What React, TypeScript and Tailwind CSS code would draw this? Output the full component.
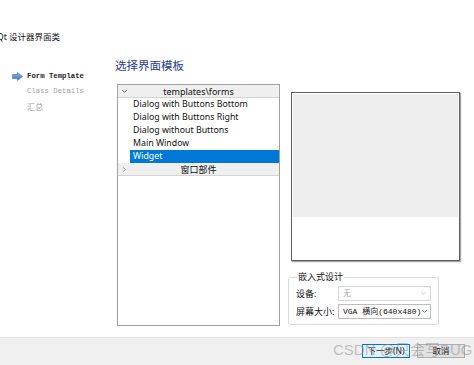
import React from 'react';

const templates = [
  'Dialog with Buttons Bottom',
  'Dialog with Buttons Right',
  'Dialog without Buttons',
  'Main Window',
  'Widget',
];

function Chevron({ dir, color = '#7a7a7a' }: { dir: 'down' | 'right'; color?: string }) {
  return (
    <svg width="7" height="7" viewBox="0 0 8 8" className="shrink-0">
      {dir === 'down' ? (
        <path d="M1.5 2.5 L4 5 L6.5 2.5" fill="none" stroke={color} strokeWidth="1.1" />
      ) : (
        <path d="M2.5 1.5 L5 4 L2.5 6.5" fill="none" stroke={color} strokeWidth="1.1" />
      )}
    </svg>
  );
}

function NavArrow() {
  return (
    <svg width="11" height="9" viewBox="0 0 11 9" className="shrink-0">
      <defs>
        <linearGradient id="ar" x1="0" y1="0" x2="0" y2="1">
          <stop offset="0" stopColor="#8db4ec" />
          <stop offset="1" stopColor="#3e75c9" />
        </linearGradient>
      </defs>
      <path d="M0.5 2.5 H5.5 V0.5 L10.5 4.5 L5.5 8.5 V6.5 H0.5 Z" fill="url(#ar)" stroke="#3a6bb8" strokeWidth="0.6" />
    </svg>
  );
}

function TreeHeader({ label, open }: { label: string; open: boolean }) {
  return (
    <div className="h-[13px] flex items-center bg-[#efefef] border-b border-[#d4d4d4] pl-[3px]">
      <Chevron dir={open ? 'down' : 'right'} color={open ? '#555555' : '#9a9a9a'} />
      <span className="flex-1 text-center pr-[10px] text-[9px] leading-[13px] text-[#111]">{label}</span>
    </div>
  );
}

function Combo({ text, disabled }: { text: string; disabled?: boolean }) {
  return (
    <div
      className={`w-[93px] h-[15px] flex items-center justify-between pl-[4px] pr-[3px] border bg-white ${
        disabled ? 'border-[#d6d6d6] text-[#a8a8a8]' : 'border-[#bdbdbd] text-[#111]'
      }`}
    >
      <span className="text-[8px] leading-[13px] font-['Liberation_Mono','Noto_Sans_CJK_SC',monospace] whitespace-nowrap">
        {text}
      </span>
      <Chevron dir="down" color={disabled ? '#c8c8c8' : '#6a6a6a'} />
    </div>
  );
}

export default function App() {
  return (
    <div className="relative w-[474px] h-[365px] overflow-hidden bg-white flex flex-col font-['Noto_Sans','Noto_Sans_CJK_SC',sans-serif] text-[#111]">
      <div className="h-[337px] flex flex-col">
        {/* window title */}
        <div className="mt-[31px] -ml-[3px] h-[12px] text-[8.5px] leading-[12px] whitespace-nowrap">Qt 设计器界面类</div>

        <div className="mt-[13px] flex">
          {/* steps */}
          <div className="w-[115px] pt-[13px] flex flex-col font-['Liberation_Mono','Noto_Sans_CJK_SC',monospace] text-[7.3px]">
            <div className="h-[15px] flex items-center gap-[4px] pl-[12px] font-bold text-[#222]">
              <NavArrow />
              <span>Form Template</span>
            </div>
            <div className="h-[15px] flex items-center pl-[27px] text-[#a3a3a3]">Class Details</div>
            <div className="h-[15px] flex items-center pl-[27px] text-[8px] text-[#a3a3a3] font-['Noto_Sans_CJK_SC',sans-serif]">汇总</div>
          </div>

          {/* template list */}
          <div className="w-[175px] flex flex-col">
            <div className="mt-[3px] h-[14px] text-[11.5px] leading-[14px] text-[#1f3c91] whitespace-nowrap">选择界面模板</div>
            <div className="mt-[11px] ml-[2px] w-[163px] h-[242px] border border-[#a0a0a0] bg-white flex flex-col">
              <TreeHeader label="templates\forms" open />
              {templates.map((t) => (
                <div
                  key={t}
                  className={`h-[13px] ml-[12px] pl-[3px] text-[8.8px] leading-[13px] whitespace-nowrap ${
                    t === 'Widget' ? 'bg-[#0078d7] text-white' : 'text-[#111]'
                  }`}
                >
                  {t}
                </div>
              ))}
              <TreeHeader label="窗口部件" open={false} />
            </div>
          </div>

          {/* preview + embedded design */}
          <div className="flex-1 flex flex-col">
            <div className="mt-[36px] ml-[1px] w-[169px] h-[169px] border border-[#5e5e5e] shadow-[1px_1px_1px_rgba(0,0,0,0.35)] bg-white p-[1px]">
              <div className="h-[123px] bg-[#eeeeee]" />
            </div>
            <fieldset className="mt-[10px] -ml-[2px] w-[151px] border border-[#dadada] rounded-[2px] px-[7px] pt-[3px] pb-[5px]">
              <legend className="ml-[1px] px-[1px] text-[9px] leading-[12px]">嵌入式设计</legend>
              <div className="flex flex-col gap-[3px]">
                <div className="flex items-center justify-between">
                  <span className="text-[9px] leading-[12px]">设备:</span>
                  <Combo text="无" disabled />
                </div>
                <div className="flex items-center justify-between">
                  <span className="text-[9px] leading-[12px]">屏幕大小:</span>
                  <Combo text="VGA 横向(640x480)" />
                </div>
              </div>
            </fieldset>
          </div>
        </div>
      </div>

      {/* button bar */}
      <div className="relative flex-1 bg-[#f0f0f0] border-t border-[#e2e2e2] flex justify-end items-start pt-[6px] pr-[9px] gap-[7px]">
        <button className="w-[48px] h-[14px] border border-[#0078d7] bg-[#e5f1fb] text-[8.5px] leading-[12px]">下一步(N)</button>
        <button className="w-[48px] h-[14px] border border-[#adadad] bg-[#e1e1e1] text-[8.5px] leading-[12px]">取消</button>
        <div className="absolute left-[333px] top-[2px] text-[15px] leading-[20px] text-[rgba(140,140,140,0.5)] font-['Liberation_Sans','Noto_Sans_CJK_SC',sans-serif] whitespace-nowrap pointer-events-none">
          CSDN @只会写BUG
        </div>
      </div>
    </div>
  );
}
